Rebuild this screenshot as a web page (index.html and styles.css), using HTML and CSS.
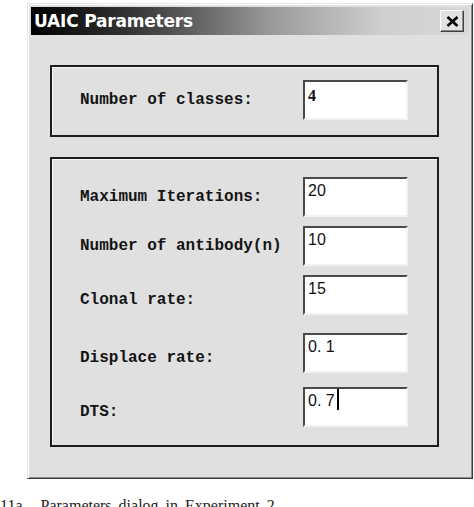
FILE: index.html
```html
<!DOCTYPE html>
<html>
<head>
<meta charset="utf-8">
<link rel="stylesheet" href="styles.css">
</head>
<body>
<div class="window">
  <div class="titlebar">
    <span class="title">UAIC Parameters</span>
    <div class="close">
      <svg width="13" height="11" viewBox="0 0 13 11"><path d="M1.5 1 L11.5 10 M11.5 1 L1.5 10" stroke="#000" stroke-width="2.6" fill="none"/></svg>
    </div>
  </div>
  <div class="body">
    <div class="group group-top">
      <div class="row">
        <span class="label">Number of classes:</span>
        <div class="field serif">4</div>
      </div>
    </div>
    <div class="group group-main">
      <div class="row">
        <span class="label">Maximum Iterations:</span>
        <div class="field">20</div>
      </div>
      <div class="row gap-s">
        <span class="label">Number of antibody(n)</span>
        <div class="field">10</div>
      </div>
      <div class="row gap-s">
        <span class="label low">Clonal rate:</span>
        <div class="field">15</div>
      </div>
      <div class="row gap-l">
        <span class="label low">Displace rate:</span>
        <div class="field">0. 1</div>
      </div>
      <div class="row gap-m">
        <span class="label low">DTS:</span>
        <div class="field">0. 7<span class="caret"></span></div>
      </div>
    </div>
  </div>
</div>
<p class="caption"><span class="fig">11a</span>Parameters dialog in Experiment 2</p>
</body>
</html>
```
FILE: styles.css
```css
html, body {
  margin: 0;
  padding: 0;
  background: #fff;
  overflow: hidden;
}
body {
  width: 474px;
  height: 507px;
  padding-top: 3px;
  box-sizing: border-box;
}
.window {
  margin-left: 27px;
  width: 446px;
  box-sizing: border-box;
  background: #e0e0e0;
  border: 1px solid;
  border-color: #e6e6e6 #3a3a3a #3a3a3a #e6e6e6;
  box-shadow: inset 1px 1px 0 #ffffff, inset -1px -1px 0 #8a8a8a;
  padding: 3px;
}
.titlebar {
  height: 28px;
  display: flex;
  align-items: center;
  justify-content: space-between;
  background: linear-gradient(to right, #000000 0%, #3a3a3a 25%, #9a9a9a 55%, #cfcfcf 80%, #d8d8d8 100%);
  padding: 0 5px 0 3px;
}
.title {
  font-family: "DejaVu Sans", sans-serif;
  font-weight: bold;
  font-size: 17px;
  color: #fff;
  letter-spacing: -0.2px;
}
.close {
  width: 24px;
  height: 22px;
  box-sizing: border-box;
  background: #e2e2e2;
  border: 1px solid;
  border-color: #ffffff #404040 #404040 #ffffff;
  box-shadow: inset -1px -1px 0 #8a8a8a;
  display: flex;
  align-items: center;
  justify-content: center;
}
.body {
  padding: 30px 30px 28px 19px;
}
.group {
  border: 2px solid #1c1c1c;
  box-shadow: inset 1px 1px 0 #f6f6f6;
  padding-left: 28px;
}
.group-top {
  height: 72px;
  box-sizing: border-box;
  padding-top: 13px;
  margin-bottom: 20px;
}
.group-main {
  height: 290px;
  box-sizing: border-box;
  padding-top: 18px;
  display: flex;
  flex-direction: column;
}
.row {
  display: flex;
  align-items: center;
  height: 40px;
}
.gap-s { margin-top: 9px; }
.gap-m { margin-top: 14px; }
.gap-l { margin-top: 18px; }
.label {
  width: 223px;
  font-family: "Liberation Mono", monospace;
  font-weight: bold;
  font-size: 16px;
  color: #141414;
  white-space: pre;
}
.label.low {
  padding-top: 10px;
}
.field {
  width: 105px;
  height: 40px;
  box-sizing: border-box;
  background: #fff;
  border: 2px solid;
  border-color: #4a4a4a #f2f2f2 #f2f2f2 #4a4a4a;
  padding: 4px 0 0 3px;
  font-family: "Liberation Sans", sans-serif;
  font-size: 16px;
  line-height: 16px;
  color: #111;
}
.field.serif {
  font-family: "Liberation Serif", serif;
  font-weight: bold;
  padding-top: 6px;
}
.caret {
  display: inline-block;
  width: 2px;
  height: 21px;
  background: #000;
  vertical-align: top;
  margin-top: -4px;
  margin-left: 2px;
}
.caption {
  margin: 19px 0 0 0;
  font-family: "Liberation Serif", serif;
  font-size: 16px;
  line-height: 16px;
  color: #222;
  white-space: nowrap;
  word-spacing: 3px;
}
.fig {
  margin-right: 18px;
}
```
